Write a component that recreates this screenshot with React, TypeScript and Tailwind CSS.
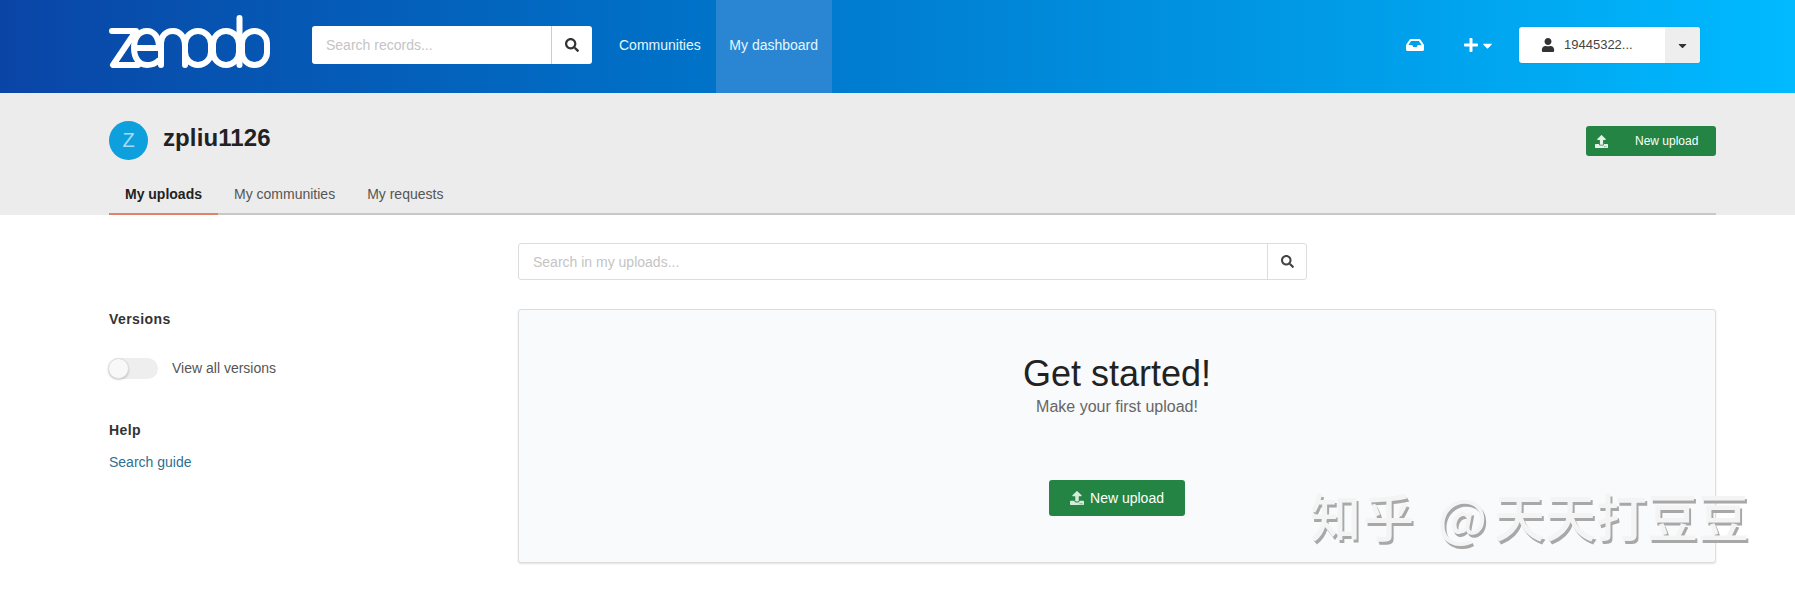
import { FaCaretDown, FaInbox, FaPlus, FaSearch, FaUpload, FaUser } from 'react-icons/fa';

function ZenodoLogo() {
  return (
    <svg width="170" height="64" viewBox="0 0 170 64" fill="none" stroke="white" strokeWidth="6" strokeLinecap="round" strokeLinejoin="round" className="shrink-0 mb-[9px]">
      <path d="M7 21H31L8 55H33" />
      <path d="M29 38H54C54 27 49 21 42 21C34 21 29 28 29 38C29 48 34 55 42 55C46 55 50 54 53 51" />
      <path d="M56 55V33C56 26 61 21 68 21C75 21 80 27 80 36V55" />
      <rect x="80" y="21" width="26" height="34" rx="13" />
      <rect x="108" y="21" width="26" height="34" rx="13" />
      <path d="M134.500 8V55" />
      <rect x="137" y="21" width="25" height="34" rx="12.500" />
    </svg>
  );
}

export default function App() {
  return (
    <div className="min-h-[590px] bg-white font-['Liberation_Sans',Arial,sans-serif] text-sm text-[#333] relative overflow-hidden">
      <header className="h-[93px] flex items-center pl-[105px] pr-[95px] bg-gradient-to-r from-[#0a45a6] to-[#01baff]">
        <ZenodoLogo />
        <div className="ml-[37px] mb-[3px] w-[280px] h-[38px] flex bg-white rounded-[3px]">
          <div className="flex-1 flex items-center pl-[14px] text-[#c4c4c4]">Search records...</div>
          <div className="w-[41px] flex items-center justify-center border-l border-[#ccc] text-[#333]">
            <FaSearch size={14} />
          </div>
        </div>
        <nav className="ml-[14px] h-full flex gap-[2px] text-[#e4f6ff]">
          <a className="px-[13px] flex items-center mb-[3px]">Communities</a>
          <a className="w-[116px] flex items-center justify-center bg-[#2a86d2]"><span className="mb-[3px]">My dashboard</span></a>
        </nav>
        <div className="ml-auto flex items-center mb-[3px]">
          <FaInbox size={18} className="text-white" />
          <div className="ml-[39px] flex items-center text-white">
            <FaPlus size={16} />
            <FaCaretDown size={15} className="ml-[1px]" />
          </div>
          <div className="ml-[24px] w-[181px] h-[36px] flex bg-white rounded-[3px] shadow-[0_0_1px_rgba(0,0,0,0.3)] overflow-hidden">
            <div className="flex-1 flex items-center pl-[22px] text-[13px] text-[#444]">
              <FaUser size={14} className="text-[#333]" />
              <span className="ml-[9px]">19445322...</span>
            </div>
            <div className="w-[35px] flex items-center justify-center bg-[#eee] text-[#333]">
              <FaCaretDown size={13} />
            </div>
          </div>
        </div>
      </header>

      <section className="h-[122px] bg-[#ececec] pl-[109px] pr-[79px]">
        <div className="h-[80px] flex items-center justify-between pt-[22px] pb-[8px]">
          <div className="flex items-center">
            <div className="w-[39px] h-[39px] rounded-full bg-[#0e9fdd] text-[#a6dcf3] text-[20px] flex items-center justify-center">Z</div>
            <h1 className="ml-[15px] mb-[4px] text-[24px] font-bold text-[#222] tracking-[0.1px]">zpliu1126</h1>
          </div>
          <button className="mt-[2px] w-[130px] h-[30px] flex items-center pl-[9px] bg-[#238443] text-white text-xs rounded-[3px]">
            <FaUpload size={13} className="text-[#e3f1e7]" />
            <span className="ml-[27px]">New upload</span>
          </button>
        </div>
        <div className="h-[42px] flex border-b-2 border-[#c8c8c8] text-[#555]">
          <a className="w-[109px] -mb-[2px] flex items-center justify-center pt-[2px] border-b-2 border-[#e0816a] font-bold text-[#222]">My uploads</a>
          <a className="px-4 flex items-center pt-[2px]">My communities</a>
          <a className="px-4 flex items-center pt-[2px]">My requests</a>
        </div>
      </section>

      <main className="flex pl-[109px] pr-[79px]">
        <aside className="w-[409px] shrink-0 pt-[94px]">
          <h3 className="font-bold text-[#333] tracking-[0.4px] leading-[20px]">Versions</h3>
          <div className="mt-[28px] flex items-center h-[22px]">
            <div className="w-[50px] h-[21px] rounded-full bg-[#eee] -ml-px">
              <div className="w-[21px] h-[21px] rounded-full bg-[#f8f8f8] border border-[#ddd] shadow-[0_1px_2px_rgba(0,0,0,0.2)]" />
            </div>
            <span className="ml-[14px] text-[#555]">View all versions</span>
          </div>
          <h3 className="mt-[41px] font-bold text-[#333] tracking-[0.4px] leading-[20px]">Help</h3>
          <a className="block mt-[12px] text-[#2f6f94] leading-[20px]">Search guide</a>
        </aside>

        <div className="flex-1 pt-[28px]">
          <div className="w-[789px] h-[37px] flex border border-[#ddd] rounded-[3px] bg-white">
            <div className="flex-1 flex items-center pl-[14px] text-[#c4c4c4]">Search in my uploads...</div>
            <div className="w-[39px] flex items-center justify-center border-l border-[#ddd] text-[#444]">
              <FaSearch size={13} />
            </div>
          </div>
          <div className="mt-[29px] h-[254px] flex flex-col items-center pt-[44px] bg-[#f9fafb] border border-[#ddd] rounded-[3px] shadow-[0_1px_2px_rgba(0,0,0,0.12)]">
            <h2 className="text-[36px] leading-[40px] text-[#222]">Get started!</h2>
            <p className="mt-[3px] text-base leading-[20px] text-[#666]">Make your first upload!</p>
            <button className="mt-[63px] w-[136px] h-[36px] flex items-center justify-center bg-[#238443] text-white text-sm rounded-[3px]">
              <FaUpload size={14} className="text-[#d5ead9]" />
              <span className="ml-[6px]">New upload</span>
            </button>
          </div>
        </div>
      </main>

      <div className="absolute left-[1310px] top-[483px] whitespace-nowrap text-[51px] leading-[64px] font-medium [word-spacing:10px] font-['Noto_Sans_CJK_SC',sans-serif] text-[#f4f4f4] [text-shadow:2px_3px_0_#a8a8a8]">
        <span className="tracking-[2px]">知乎</span> <span className="mr-[7px]">@</span>天天打豆豆
      </div>
    </div>
  );
}
